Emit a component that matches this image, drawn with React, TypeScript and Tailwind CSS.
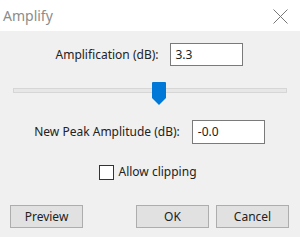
export default function App() {
  return (
    <div
      className="flex h-[237px] w-[300px] flex-col overflow-hidden bg-white text-[12px] text-[#222]"
      style={{ fontFamily: '"Noto Sans", "Open Sans", sans-serif' }}
    >
      {/* title bar */}
      <div className="flex h-[31px] items-center justify-between bg-white pl-[3px] pr-[12px]">
        <span className="text-[14px] text-[#8c8c8c]">Amplify</span>
        <svg width="15" height="15" viewBox="0 0 15 15" className="mt-[1px]">
          <path d="M0.5 0.5 L14.5 14.5 M14.5 0.5 L0.5 14.5" stroke="#777" strokeWidth="1" />
        </svg>
      </div>

      <div className="flex flex-1 flex-col bg-[#f0f0f0]">
        <div className="mt-[12px] flex items-center justify-center gap-[11px] pr-[2px]">
          <span>Amplification (dB):</span>
          <div className="flex h-[23px] w-[73px] items-center border border-[#7a7a7a] bg-white px-[5px]">
            3.3
          </div>
        </div>

        <div className="relative mx-[13px] mt-[16px] h-[23px]">
          <div className="absolute left-0 right-0 top-[6px] h-[5px] border border-[#d6d6d6] bg-[#e7e7e7]" />
          <svg
            width="14"
            height="23"
            viewBox="0 0 14 23"
            className="absolute left-[139px] top-0"
          >
            <path d="M1 0 H13 Q14 0 14 1 V16 L7 23 L0 16 V1 Q0 0 1 0 Z" fill="#0078d7" />
          </svg>
        </div>

        <div className="mt-[15px] flex items-center justify-center gap-[12px] pr-[1px]">
          <span>New Peak Amplitude (dB):</span>
          <div className="flex h-[24px] w-[73px] items-center border border-[#7a7a7a] bg-white px-[5px]">
            -0.0
          </div>
        </div>

        <div className="mt-[19px] flex items-center justify-center gap-[4px] pr-[4px]">
          <div className="h-[15px] w-[15px] border border-[#333] bg-white" />
          <span>Allow clipping</span>
        </div>

        <div className="mt-[24px] flex items-center pl-[10px] pr-[11px]">
          <button className="h-[23px] w-[73px] border border-[#adadad] bg-[#e1e1e1]">Preview</button>
          <div className="flex-1" />
          <button className="h-[23px] w-[73px] border border-[#adadad] bg-[#e1e1e1]">OK</button>
          <button className="ml-[7px] h-[23px] w-[73px] border border-[#adadad] bg-[#e1e1e1]">Cancel</button>
        </div>
      </div>
    </div>
  );
}
